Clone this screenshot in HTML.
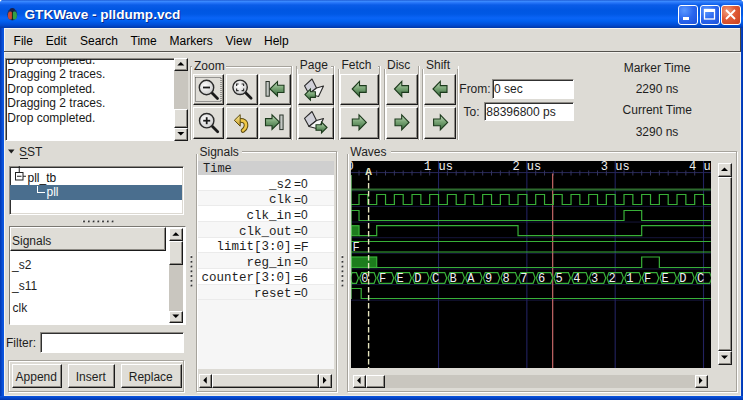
<!DOCTYPE html>
<html><head><meta charset="utf-8">
<style>
*{box-sizing:border-box;margin:0;padding:0}
html,body{width:743px;height:400px;overflow:hidden;background:#ffffff}
body{position:relative;font-family:"Liberation Sans",sans-serif;font-size:12px;color:#000}
.a{position:absolute}
.t{position:absolute;white-space:pre;line-height:1}
.btn{position:absolute;background:#dfddd7;border-top:1px solid #fff;border-left:1px solid #fff;border-right:1px solid #1a1a1a;border-bottom:1px solid #1a1a1a;box-shadow:inset -1px -1px 0 #8d8a84}
.sunk{position:absolute;background:#fff;border-top:1px solid #8d8a84;border-left:1px solid #8d8a84;border-right:1px solid #fff;border-bottom:1px solid #fff;box-shadow:inset 1px 1px 0 #303030}
.frm{position:absolute;border:1px solid #a6a39c;box-shadow:1px 1px 0 #fff, inset 1px 1px 0 #fff}
.trough{position:absolute;background:#c9c6bf}
svg{position:absolute;left:0;top:0}
</style></head><body>

<div class="a" style="left:0.00px;top:0.00px;width:743.00px;height:400.00px;background:#0b50d9;border-radius:4px 4px 0 0"></div>
<div class="a" style="left:0.00px;top:0.00px;width:743.00px;height:28.00px;background:linear-gradient(#1a56d0 0px,#3d8dff 1.2px,#2a78fa 2.5px,#0a5ce8 5px,#0056e2 10px,#0058e4 14px,#0a64f6 18px,#0060f0 21px,#004cd4 25px,#0038a8 28px);border-radius:4px 4px 0 0"></div>
<div class="a" style="left:0.00px;top:6.00px;width:4.00px;height:394.00px;background:linear-gradient(90deg,#0036b0,#0a55e0 3px)"></div>
<div class="a" style="left:739.00px;top:6.00px;width:4.00px;height:394.00px;background:linear-gradient(90deg,#0a55e0,#0036b0 4px)"></div>
<div class="a" style="left:0.00px;top:396.00px;width:743.00px;height:4.00px;background:linear-gradient(#0a55e0,#0036b0)"></div>
<div class="a" style="left:0.00px;top:0.00px;width:743.00px;height:28.00px;background:linear-gradient(#1a56d0 0px,#3d8dff 1.2px,#2a78fa 2.5px,#0a5ce8 5px,#0056e2 10px,#0058e4 14px,#0a64f6 18px,#0060f0 21px,#004cd4 25px,#0038a8 28px);border-radius:4px 4px 0 0"></div>
<div class="a" style="left:4.00px;top:28.00px;width:737.00px;height:368.00px;background:#dddbd5;box-shadow:inset 1px 1px 0 #f4f3ef, inset -1px -1px 0 #eeede8"></div>
<div class="a" style="left:4.00px;top:28.00px;width:737.00px;height:24.30px;border-right:1.5px solid #4a4843;border-bottom:1.6px solid #55534e;box-shadow:inset 1px 1px 0 #f6f5f1"></div>
<svg width="743" height="30" style="left:0;top:0"><ellipse cx="12.3" cy="14.5" rx="5" ry="6" fill="#1a2a50" opacity="0.85"/><ellipse cx="10.3" cy="15.5" rx="2.4" ry="4" fill="#c84a36"/><ellipse cx="14.5" cy="15.5" rx="2.4" ry="4" fill="#34a044"/><ellipse cx="12.3" cy="9.8" rx="2.6" ry="1.8" fill="#18204a"/><line x1="12.4" y1="11" x2="12.4" y2="20" stroke="#102010" stroke-width="0.9"/></svg>
<div class="t" style="left:24.50px;top:7.89px;font-size:13.6px;color:#fff;font-family:'Liberation Sans',sans-serif;font-weight:bold;text-shadow:1px 1px 0 #0a2a8a;">GTKWave - plldump.vcd</div>
<div class="a" style="left:678px;top:5px;width:20px;height:20px;border:1px solid #fff;border-radius:3px;background:radial-gradient(circle at 30% 25%,#5a98ff,#2a66ee 50%,#1c50d8)"></div>
<div class="a" style="left:699.5px;top:5px;width:20px;height:20px;border:1px solid #fff;border-radius:3px;background:radial-gradient(circle at 30% 25%,#5a98ff,#2a66ee 50%,#1c50d8)"></div>
<div class="a" style="left:721px;top:5px;width:20px;height:20px;border:1px solid #fff;border-radius:3px;background:radial-gradient(circle at 30% 30%,#f0a080,#e05a36 45%,#c8401e)"></div>
<svg width="743" height="30" style="left:0;top:0"><rect x="683" y="17" width="6" height="3" fill="#fff"/><rect x="704.5" y="9.5" width="10" height="9.5" fill="none" stroke="#fff" stroke-width="1.3"/><rect x="704.5" y="9.5" width="10" height="2.5" fill="#fff"/><path d="M726 10 L735 19 M735 10 L726 19" stroke="#fff" stroke-width="1.8"/></svg>
<div class="a" style="left:4.00px;top:52.30px;width:737.00px;height:1.00px;background:#f4f3ef"></div>
<div class="t" style="left:13.60px;top:34.84px;font-size:12px;color:#000;font-family:'Liberation Sans',sans-serif;">File</div>
<div class="t" style="left:45.80px;top:34.84px;font-size:12px;color:#000;font-family:'Liberation Sans',sans-serif;">Edit</div>
<div class="t" style="left:80.00px;top:34.84px;font-size:12px;color:#000;font-family:'Liberation Sans',sans-serif;">Search</div>
<div class="t" style="left:130.50px;top:34.84px;font-size:12px;color:#000;font-family:'Liberation Sans',sans-serif;">Time</div>
<div class="t" style="left:169.50px;top:34.84px;font-size:12px;color:#000;font-family:'Liberation Sans',sans-serif;">Markers</div>
<div class="t" style="left:225.50px;top:34.84px;font-size:12px;color:#000;font-family:'Liberation Sans',sans-serif;">View</div>
<div class="t" style="left:264.00px;top:34.84px;font-size:12px;color:#000;font-family:'Liberation Sans',sans-serif;">Help</div>
<div class="sunk" style="left:5px;top:57.5px;width:170px;height:83px;overflow:hidden">
<div class="t" style="left:1.3px;top:-4.66px;font-size:12px;color:#1a1a1a">Drop completed.</div>
<div class="t" style="left:1.3px;top:9.89px;font-size:12px;color:#1a1a1a">Dragging 2 traces.</div>
<div class="t" style="left:1.3px;top:24.44px;font-size:12px;color:#1a1a1a">Drop completed.</div>
<div class="t" style="left:1.3px;top:38.99px;font-size:12px;color:#1a1a1a">Dragging 2 traces.</div>
<div class="t" style="left:1.3px;top:53.54px;font-size:12px;color:#1a1a1a">Drop completed.</div>
</div>
<div class="trough" style="left:174.30px;top:57.50px;width:14.00px;height:83.30px;"></div>
<div class="btn" style="left:174.3px;top:57.5px;width:14.0px;height:13.5px"></div>
<div class="btn" style="left:174.3px;top:108.5px;width:14.0px;height:19.299999999999997px"></div>
<div class="btn" style="left:174.3px;top:127.80000000000001px;width:14.0px;height:13px"></div>
<div class="frm" style="left:190px;top:66px;width:102px;height:73.5px;border-bottom:none;box-shadow:1px 0 0 #fff, inset 1px 1px 0 #fff;"></div>
<div class="a" style="left:192.00px;top:63.00px;width:34.00px;height:6.00px;background:#dddbd5"></div>
<div class="frm" style="left:295.5px;top:66px;width:38.5px;height:73.5px;border-bottom:none;box-shadow:1px 0 0 #fff, inset 1px 1px 0 #fff;"></div>
<div class="a" style="left:297.00px;top:63.00px;width:34.00px;height:6.00px;background:#dddbd5"></div>
<div class="frm" style="left:337.5px;top:66px;width:42.0px;height:73.5px;border-bottom:none;box-shadow:1px 0 0 #fff, inset 1px 1px 0 #fff;"></div>
<div class="a" style="left:338.00px;top:63.00px;width:40.00px;height:6.00px;background:#dddbd5"></div>
<div class="frm" style="left:384px;top:66px;width:34.5px;height:73.5px;border-bottom:none;box-shadow:1px 0 0 #fff, inset 1px 1px 0 #fff;"></div>
<div class="a" style="left:384.00px;top:63.00px;width:34.00px;height:6.00px;background:#dddbd5"></div>
<div class="frm" style="left:422px;top:66px;width:35.5px;height:73.5px;border-bottom:none;box-shadow:1px 0 0 #fff, inset 1px 1px 0 #fff;"></div>
<div class="a" style="left:422.00px;top:63.00px;width:36.00px;height:6.00px;background:#dddbd5"></div>
<div class="t" style="left:194.00px;top:59.84px;font-size:12px;color:#1e1e1e;font-family:'Liberation Sans',sans-serif;">Zoom</div>
<div class="t" style="left:299.80px;top:59.34px;font-size:12px;color:#1e1e1e;font-family:'Liberation Sans',sans-serif;">Page</div>
<div class="t" style="left:341.50px;top:59.34px;font-size:12px;color:#1e1e1e;font-family:'Liberation Sans',sans-serif;">Fetch</div>
<div class="t" style="left:387.00px;top:59.34px;font-size:12px;color:#1e1e1e;font-family:'Liberation Sans',sans-serif;">Disc</div>
<div class="t" style="left:426.00px;top:59.34px;font-size:12px;color:#1e1e1e;font-family:'Liberation Sans',sans-serif;">Shift</div>
<div class="btn" style="left:192.5px;top:74px;width:31.5px;height:31px"></div>
<div class="btn" style="left:192.5px;top:106.5px;width:31.5px;height:32.0px"></div>
<div class="btn" style="left:225.5px;top:74px;width:32.0px;height:31px"></div>
<div class="btn" style="left:225.5px;top:106.5px;width:32.0px;height:32.0px"></div>
<div class="btn" style="left:258.5px;top:74px;width:32.5px;height:31px"></div>
<div class="btn" style="left:258.5px;top:106.5px;width:32.5px;height:32.0px"></div>
<div class="btn" style="left:298px;top:74px;width:35.5px;height:31px"></div>
<div class="btn" style="left:298px;top:106.5px;width:35.5px;height:32.0px"></div>
<div class="btn" style="left:340px;top:74px;width:38.5px;height:31px"></div>
<div class="btn" style="left:340px;top:106.5px;width:38.5px;height:32.0px"></div>
<div class="btn" style="left:385.5px;top:74px;width:32.0px;height:31px"></div>
<div class="btn" style="left:385.5px;top:106.5px;width:32.0px;height:32.0px"></div>
<div class="btn" style="left:423.5px;top:74px;width:32.5px;height:31px"></div>
<div class="btn" style="left:423.5px;top:106.5px;width:32.5px;height:32.0px"></div>
<div class="t" style="left:459.30px;top:82.84px;font-size:12px;color:#1e1e1e;font-family:'Liberation Sans',sans-serif;">From:</div>
<div class="sunk" style="left:491.5px;top:79px;width:82px;height:19.5px"></div>
<div class="t" style="left:494.00px;top:82.84px;font-size:12px;color:#1e1e1e;font-family:'Liberation Sans',sans-serif;">0 sec</div>
<div class="t" style="left:463.50px;top:105.64px;font-size:12px;color:#1e1e1e;font-family:'Liberation Sans',sans-serif;">To:</div>
<div class="sunk" style="left:484px;top:101.5px;width:89.5px;height:19.5px"></div>
<div class="t" style="left:486.30px;top:105.64px;font-size:12px;color:#1e1e1e;font-family:'Liberation Sans',sans-serif;">88396800 ps</div>
<div class="t" style="left:557.00px;width:200px;text-align:center;top:62.14px;font-size:12px;color:#1e1e1e;font-family:'Liberation Sans',sans-serif;">Marker Time</div>
<div class="t" style="left:557.00px;width:200px;text-align:center;top:83.04px;font-size:12px;color:#1e1e1e;font-family:'Liberation Sans',sans-serif;">2290 ns</div>
<div class="t" style="left:557.30px;width:200px;text-align:center;top:104.34px;font-size:12px;color:#1e1e1e;font-family:'Liberation Sans',sans-serif;">Current Time</div>
<div class="t" style="left:557.00px;width:200px;text-align:center;top:125.74px;font-size:12px;color:#1e1e1e;font-family:'Liberation Sans',sans-serif;">3290 ns</div>
<div class="t" style="left:19.00px;top:145.84px;font-size:12px;color:#1e1e1e;font-family:'Liberation Sans',sans-serif;">SST</div>
<div class="a" style="left:19.50px;top:157.50px;width:8.00px;height:1.00px;background:#1e1e1e"></div>
<div class="sunk" style="left:8.5px;top:165.5px;width:175.5px;height:49px;box-shadow:inset 1px 1px 0 #303030, inset -1px -1px 0 #dcd9d2"></div>
<div class="a" style="left:10.00px;top:185.00px;width:172.00px;height:14.50px;background:#4a6e8e"></div>
<div class="t" style="left:27.50px;top:171.54px;font-size:12px;color:#111;font-family:'Liberation Sans',sans-serif;">pll_tb</div>
<div class="t" style="left:46.50px;top:186.44px;font-size:12px;color:#fff;font-family:'Liberation Sans',sans-serif;">pll</div>
<div class="sunk" style="left:8.5px;top:226.3px;width:177px;height:98.5px;border-color:#7a7872 #fff #fff #7a7872;box-shadow:none"></div>
<div class="btn" style="left:9.5px;top:227.3px;width:156.5px;height:24.2px"></div>
<div class="t" style="left:12.00px;top:235.24px;font-size:12px;color:#1e1e1e;font-family:'Liberation Sans',sans-serif;">Signals</div>
<div class="t" style="left:12.00px;top:258.84px;font-size:12px;color:#1e1e1e;font-family:'Liberation Sans',sans-serif;">_s2</div>
<div class="t" style="left:12.00px;top:279.84px;font-size:12px;color:#1e1e1e;font-family:'Liberation Sans',sans-serif;">_s11</div>
<div class="t" style="left:12.50px;top:301.84px;font-size:12px;color:#1e1e1e;font-family:'Liberation Sans',sans-serif;">clk</div>
<div class="trough" style="left:169.30px;top:227.80px;width:14.00px;height:95.00px;"></div>
<div class="btn" style="left:169.3px;top:227.8px;width:14.0px;height:13.3px"></div>
<div class="btn" style="left:169.3px;top:241px;width:14.0px;height:24px"></div>
<div class="btn" style="left:169.3px;top:310.5px;width:14.0px;height:12.3px"></div>
<div class="t" style="left:6.00px;top:337.04px;font-size:12px;color:#1e1e1e;font-family:'Liberation Sans',sans-serif;">Filter:</div>
<div class="sunk" style="left:39.5px;top:332.3px;width:144.3px;height:21px"></div>
<div class="frm" style="left:8px;top:359.5px;width:176px;height:32.5px;box-shadow:inset 1px 1px 0 #fff, 1px 1px 0 #fff"></div>
<div class="btn" style="left:11.5px;top:363.5px;width:50.5px;height:24.5px"></div>
<div class="t" style="left:-63.75px;width:200px;text-align:center;top:371.14px;font-size:12px;color:#1e1e1e;font-family:'Liberation Sans',sans-serif;">Append</div>
<div class="btn" style="left:68px;top:363.5px;width:46.5px;height:24.5px"></div>
<div class="t" style="left:-9.25px;width:200px;text-align:center;top:371.14px;font-size:12px;color:#1e1e1e;font-family:'Liberation Sans',sans-serif;">Insert</div>
<div class="btn" style="left:120.5px;top:363.5px;width:61.5px;height:24.5px"></div>
<div class="t" style="left:50.75px;width:200px;text-align:center;top:371.14px;font-size:12px;color:#1e1e1e;font-family:'Liberation Sans',sans-serif;">Replace</div>
<div class="frm" style="left:195.5px;top:150.8px;width:141.0px;height:241.2px;"></div>
<div class="a" style="left:196.00px;top:147.80px;width:46.00px;height:6.00px;background:#dddbd5"></div>
<div class="t" style="left:199.50px;top:146.04px;font-size:12px;color:#1e1e1e;font-family:'Liberation Sans',sans-serif;">Signals</div>
<div class="a" style="left:198.00px;top:160.50px;width:136.00px;height:208.50px;background:#f6f6f6"></div>
<div class="a" style="left:198.00px;top:160.50px;width:136.00px;height:14.70px;background:#cfcfcf"></div>
<div class="t" style="left:203.00px;top:163.30px;font-size:12px;color:#1e1e1e;font-family:'Liberation Mono',monospace;">Time</div>
<div class="a" style="left:198.00px;top:175.20px;width:136.00px;height:15.63px;background:#ffffff;border-bottom:1px solid #ebebeb"></div>
<div class="a" style="left:198.00px;top:190.83px;width:136.00px;height:15.63px;background:#f7f7f7;border-bottom:1px solid #ebebeb"></div>
<div class="a" style="left:198.00px;top:206.46px;width:136.00px;height:15.63px;background:#ffffff;border-bottom:1px solid #ebebeb"></div>
<div class="a" style="left:198.00px;top:222.09px;width:136.00px;height:15.63px;background:#f7f7f7;border-bottom:1px solid #ebebeb"></div>
<div class="a" style="left:198.00px;top:237.72px;width:136.00px;height:15.63px;background:#ffffff;border-bottom:1px solid #ebebeb"></div>
<div class="a" style="left:198.00px;top:253.35px;width:136.00px;height:15.63px;background:#f7f7f7;border-bottom:1px solid #ebebeb"></div>
<div class="a" style="left:198.00px;top:268.98px;width:136.00px;height:15.63px;background:#ffffff;border-bottom:1px solid #ebebeb"></div>
<div class="a" style="left:198.00px;top:284.61px;width:136.00px;height:15.63px;background:#f7f7f7;border-bottom:1px solid #ebebeb"></div>
<div class="t" style="left:91.60px;width:200px;text-align:right;top:178.62px;font-size:12.5px;color:#1e1e1e;font-family:'Liberation Mono',monospace">_s2</div>
<div class="t" style="left:294.00px;top:178.04px;font-size:12px;color:#1e1e1e;font-family:'Liberation Sans',sans-serif;">=0</div>
<div class="t" style="left:91.60px;width:200px;text-align:right;top:194.25px;font-size:12.5px;color:#1e1e1e;font-family:'Liberation Mono',monospace">clk</div>
<div class="t" style="left:294.00px;top:193.67px;font-size:12px;color:#1e1e1e;font-family:'Liberation Sans',sans-serif;">=0</div>
<div class="t" style="left:91.60px;width:200px;text-align:right;top:209.88px;font-size:12.5px;color:#1e1e1e;font-family:'Liberation Mono',monospace">clk_in</div>
<div class="t" style="left:294.00px;top:209.30px;font-size:12px;color:#1e1e1e;font-family:'Liberation Sans',sans-serif;">=0</div>
<div class="t" style="left:91.60px;width:200px;text-align:right;top:225.51px;font-size:12.5px;color:#1e1e1e;font-family:'Liberation Mono',monospace">clk_out</div>
<div class="t" style="left:294.00px;top:224.93px;font-size:12px;color:#1e1e1e;font-family:'Liberation Sans',sans-serif;">=0</div>
<div class="t" style="left:91.60px;width:200px;text-align:right;top:241.14px;font-size:12.5px;color:#1e1e1e;font-family:'Liberation Mono',monospace">limit[3:0]</div>
<div class="t" style="left:294.00px;top:240.56px;font-size:12px;color:#1e1e1e;font-family:'Liberation Sans',sans-serif;">=F</div>
<div class="t" style="left:91.60px;width:200px;text-align:right;top:256.77px;font-size:12.5px;color:#1e1e1e;font-family:'Liberation Mono',monospace">reg_in</div>
<div class="t" style="left:294.00px;top:256.19px;font-size:12px;color:#1e1e1e;font-family:'Liberation Sans',sans-serif;">=0</div>
<div class="t" style="left:91.60px;width:200px;text-align:right;top:272.40px;font-size:12.5px;color:#1e1e1e;font-family:'Liberation Mono',monospace">counter[3:0]</div>
<div class="t" style="left:294.00px;top:271.82px;font-size:12px;color:#1e1e1e;font-family:'Liberation Sans',sans-serif;">=6</div>
<div class="t" style="left:91.60px;width:200px;text-align:right;top:288.03px;font-size:12.5px;color:#1e1e1e;font-family:'Liberation Mono',monospace">reset</div>
<div class="t" style="left:294.00px;top:287.45px;font-size:12px;color:#1e1e1e;font-family:'Liberation Sans',sans-serif;">=0</div>
<div class="trough" style="left:199.00px;top:374.00px;width:133.00px;height:13.50px;"></div>
<div class="btn" style="left:199px;top:374px;width:13px;height:13.5px"></div>
<div class="btn" style="left:212px;top:374px;width:106.5px;height:13.5px"></div>
<div class="btn" style="left:318.5px;top:374px;width:13.5px;height:13.5px"></div>
<div class="frm" style="left:347px;top:150.8px;width:390px;height:241.2px;"></div>
<div class="a" style="left:347.00px;top:147.80px;width:44.00px;height:6.00px;background:#dddbd5"></div>
<div class="t" style="left:350.30px;top:146.04px;font-size:12px;color:#1e1e1e;font-family:'Liberation Sans',sans-serif;">Waves</div>
<div class="a" style="left:350.80px;top:160.60px;width:360.00px;height:207.40px;background:#000"></div>
<div class="trough" style="left:718.00px;top:163.00px;width:14.00px;height:201.50px;"></div>
<div class="btn" style="left:718px;top:163px;width:14px;height:13.5px"></div>
<div class="btn" style="left:718px;top:176.5px;width:14px;height:174.5px"></div>
<div class="btn" style="left:718px;top:351.0px;width:14px;height:13.5px"></div>
<div class="trough" style="left:352.80px;top:374.50px;width:354.70px;height:13.00px;"></div>
<div class="btn" style="left:352.8px;top:374.5px;width:13px;height:13.0px"></div>
<div class="btn" style="left:365.6px;top:374.5px;width:19.899999999999977px;height:13.0px"></div>
<div class="btn" style="left:695.0px;top:374.5px;width:12.5px;height:13.0px"></div>
<svg width="743" height="400" style="left:0;top:0"><defs><clipPath id="wc"><rect x="350.8" y="160.6" width="359.99999999999994" height="207.4"/></clipPath></defs><g clip-path="url(#wc)"><line x1="351" y1="190.80" x2="711" y2="190.80" stroke="#16163a" stroke-width="1"/><line x1="351" y1="206.43" x2="711" y2="206.43" stroke="#16163a" stroke-width="1"/><line x1="351" y1="222.06" x2="711" y2="222.06" stroke="#16163a" stroke-width="1"/><line x1="351" y1="237.69" x2="711" y2="237.69" stroke="#16163a" stroke-width="1"/><line x1="351" y1="253.32" x2="711" y2="253.32" stroke="#16163a" stroke-width="1"/><line x1="351" y1="268.95" x2="711" y2="268.95" stroke="#16163a" stroke-width="1"/><line x1="351" y1="284.58" x2="711" y2="284.58" stroke="#16163a" stroke-width="1"/><line x1="351" y1="300.21" x2="711" y2="300.21" stroke="#16163a" stroke-width="1"/><line x1="351" y1="172.6" x2="711" y2="172.6" stroke="#28285a" stroke-width="1"/><line x1="350.20" y1="170.5" x2="350.20" y2="175.5" stroke="#34345e" stroke-width="1"/><line x1="359.03" y1="170.5" x2="359.03" y2="175.5" stroke="#34345e" stroke-width="1"/><line x1="367.87" y1="170.5" x2="367.87" y2="175.5" stroke="#34345e" stroke-width="1"/><line x1="376.70" y1="170.5" x2="376.70" y2="175.5" stroke="#34345e" stroke-width="1"/><line x1="385.53" y1="170.5" x2="385.53" y2="175.5" stroke="#34345e" stroke-width="1"/><line x1="394.37" y1="170.5" x2="394.37" y2="175.5" stroke="#34345e" stroke-width="1"/><line x1="403.20" y1="170.5" x2="403.20" y2="175.5" stroke="#34345e" stroke-width="1"/><line x1="412.03" y1="170.5" x2="412.03" y2="175.5" stroke="#34345e" stroke-width="1"/><line x1="420.86" y1="170.5" x2="420.86" y2="175.5" stroke="#34345e" stroke-width="1"/><line x1="429.70" y1="170.5" x2="429.70" y2="175.5" stroke="#34345e" stroke-width="1"/><line x1="438.53" y1="161" x2="438.53" y2="368" stroke="#222260" stroke-width="1.1"/><line x1="447.36" y1="170.5" x2="447.36" y2="175.5" stroke="#34345e" stroke-width="1"/><line x1="456.20" y1="170.5" x2="456.20" y2="175.5" stroke="#34345e" stroke-width="1"/><line x1="465.03" y1="170.5" x2="465.03" y2="175.5" stroke="#34345e" stroke-width="1"/><line x1="473.86" y1="170.5" x2="473.86" y2="175.5" stroke="#34345e" stroke-width="1"/><line x1="482.69" y1="170.5" x2="482.69" y2="175.5" stroke="#34345e" stroke-width="1"/><line x1="491.53" y1="170.5" x2="491.53" y2="175.5" stroke="#34345e" stroke-width="1"/><line x1="500.36" y1="170.5" x2="500.36" y2="175.5" stroke="#34345e" stroke-width="1"/><line x1="509.19" y1="170.5" x2="509.19" y2="175.5" stroke="#34345e" stroke-width="1"/><line x1="518.03" y1="170.5" x2="518.03" y2="175.5" stroke="#34345e" stroke-width="1"/><line x1="526.86" y1="161" x2="526.86" y2="368" stroke="#222260" stroke-width="1.1"/><line x1="535.69" y1="170.5" x2="535.69" y2="175.5" stroke="#34345e" stroke-width="1"/><line x1="544.53" y1="170.5" x2="544.53" y2="175.5" stroke="#34345e" stroke-width="1"/><line x1="553.36" y1="170.5" x2="553.36" y2="175.5" stroke="#34345e" stroke-width="1"/><line x1="562.19" y1="170.5" x2="562.19" y2="175.5" stroke="#34345e" stroke-width="1"/><line x1="571.02" y1="170.5" x2="571.02" y2="175.5" stroke="#34345e" stroke-width="1"/><line x1="579.86" y1="170.5" x2="579.86" y2="175.5" stroke="#34345e" stroke-width="1"/><line x1="588.69" y1="170.5" x2="588.69" y2="175.5" stroke="#34345e" stroke-width="1"/><line x1="597.52" y1="170.5" x2="597.52" y2="175.5" stroke="#34345e" stroke-width="1"/><line x1="606.36" y1="170.5" x2="606.36" y2="175.5" stroke="#34345e" stroke-width="1"/><line x1="615.19" y1="161" x2="615.19" y2="368" stroke="#222260" stroke-width="1.1"/><line x1="624.02" y1="170.5" x2="624.02" y2="175.5" stroke="#34345e" stroke-width="1"/><line x1="632.86" y1="170.5" x2="632.86" y2="175.5" stroke="#34345e" stroke-width="1"/><line x1="641.69" y1="170.5" x2="641.69" y2="175.5" stroke="#34345e" stroke-width="1"/><line x1="650.52" y1="170.5" x2="650.52" y2="175.5" stroke="#34345e" stroke-width="1"/><line x1="659.36" y1="170.5" x2="659.36" y2="175.5" stroke="#34345e" stroke-width="1"/><line x1="668.19" y1="170.5" x2="668.19" y2="175.5" stroke="#34345e" stroke-width="1"/><line x1="677.02" y1="170.5" x2="677.02" y2="175.5" stroke="#34345e" stroke-width="1"/><line x1="685.85" y1="170.5" x2="685.85" y2="175.5" stroke="#34345e" stroke-width="1"/><line x1="694.69" y1="170.5" x2="694.69" y2="175.5" stroke="#34345e" stroke-width="1"/><line x1="703.52" y1="161" x2="703.52" y2="368" stroke="#222260" stroke-width="1.1"/><line x1="712.35" y1="170.5" x2="712.35" y2="175.5" stroke="#34345e" stroke-width="1"/><text x="350.20" y="169.8" fill="#f0f0f0" font-family="Liberation Mono" font-size="12" text-anchor="middle">0</text><text x="438.53" y="169.8" fill="#f0f0f0" font-family="Liberation Mono" font-size="12" text-anchor="middle">1 us</text><text x="526.86" y="169.8" fill="#f0f0f0" font-family="Liberation Mono" font-size="12" text-anchor="middle">2 us</text><text x="615.19" y="169.8" fill="#f0f0f0" font-family="Liberation Mono" font-size="12" text-anchor="middle">3 us</text><text x="703.52" y="169.8" fill="#f0f0f0" font-family="Liberation Mono" font-size="12" text-anchor="middle">4 us</text><line x1="552.7" y1="173.5" x2="552.7" y2="368" stroke="#d87070" stroke-width="1.1"/><polyline points="351.00,189.40 711.00,189.40" fill="none" stroke="#2d6a2d" stroke-width="2"/><polyline points="351.00,204.50 359.03,204.50 359.03,194.50 367.87,194.50 367.87,204.50 376.70,204.50 376.70,194.50 385.53,194.50 385.53,204.50 394.37,204.50 394.37,194.50 403.20,194.50 403.20,204.50 412.03,204.50 412.03,194.50 420.86,194.50 420.86,204.50 429.70,204.50 429.70,194.50 438.53,194.50 438.53,204.50 447.36,204.50 447.36,194.50 456.20,194.50 456.20,204.50 465.03,204.50 465.03,194.50 473.86,194.50 473.86,204.50 482.69,204.50 482.69,194.50 491.53,194.50 491.53,204.50 500.36,204.50 500.36,194.50 509.19,194.50 509.19,204.50 518.03,204.50 518.03,194.50 526.86,194.50 526.86,204.50 535.69,204.50 535.69,194.50 544.53,194.50 544.53,204.50 553.36,204.50 553.36,194.50 562.19,194.50 562.19,204.50 571.03,204.50 571.03,194.50 579.86,194.50 579.86,204.50 588.69,204.50 588.69,194.50 597.52,194.50 597.52,204.50 606.36,204.50 606.36,194.50 615.19,194.50 615.19,204.50 624.02,204.50 624.02,194.50 632.86,194.50 632.86,204.50 641.69,204.50 641.69,194.50 650.52,194.50 650.52,204.50 659.36,204.50 659.36,194.50 668.19,194.50 668.19,204.50 677.02,204.50 677.02,194.50 685.85,194.50 685.85,204.50 694.69,204.50 694.69,194.50 703.52,194.50 703.52,204.50 712.00,204.50" fill="none" stroke="#38b038" stroke-width="1.2"/><polyline points="351.00,210.50 359.03,210.50 359.03,220.50 624.02,220.50 624.02,210.50 641.69,210.50 641.69,220.50 712.00,220.50" fill="none" stroke="#38b038" stroke-width="1.2"/><rect x="351.4" y="225.7" width="7.63" height="10.0" fill="#1d7d1d" stroke="#38b038" stroke-width="1.2"/><polyline points="359.03,235.70 376.70,235.70 376.70,225.70 518.03,225.70 518.03,235.70 641.69,235.70 641.69,225.70 712.00,225.70" fill="none" stroke="#38b038" stroke-width="1.2"/><polyline points="351.00,241.50 712.00,241.50" fill="none" stroke="#38b038" stroke-width="1.2"/><polyline points="351.00,252.00 712.00,252.00" fill="none" stroke="#38b038" stroke-width="1.2"/><text x="352.5" y="251" fill="#f0f0f0" font-family="Liberation Mono" font-size="12">F</text><rect x="351.4" y="257" width="25.30" height="10.5" fill="#1d7d1d" stroke="#38b038" stroke-width="1.2"/><polyline points="376.70,267.50 641.69,267.50 641.69,257.00 659.36,257.00 659.36,267.50 712.00,267.50" fill="none" stroke="#38b038" stroke-width="1.2"/><polyline points="350.10,277.95 352.10,272.60 356.43,272.60 358.43,277.95 356.43,283.30 352.10,283.30 350.10,277.95" fill="none" stroke="#38b038" stroke-width="1.2"/><polyline points="359.63,277.95 361.63,272.60 374.10,272.60 376.10,277.95 374.10,283.30 361.63,283.30 359.63,277.95" fill="none" stroke="#38b038" stroke-width="1.2"/><text x="361.23" y="281.6" fill="#f0f0f0" font-family="Liberation Mono" font-size="12">0</text><polyline points="377.30,277.95 379.30,272.60 391.76,272.60 393.76,277.95 391.76,283.30 379.30,283.30 377.30,277.95" fill="none" stroke="#38b038" stroke-width="1.2"/><text x="378.90" y="281.6" fill="#f0f0f0" font-family="Liberation Mono" font-size="12">F</text><polyline points="394.97,277.95 396.97,272.60 409.43,272.60 411.43,277.95 409.43,283.30 396.97,283.30 394.97,277.95" fill="none" stroke="#38b038" stroke-width="1.2"/><text x="396.56" y="281.6" fill="#f0f0f0" font-family="Liberation Mono" font-size="12">E</text><polyline points="412.63,277.95 414.63,272.60 427.10,272.60 429.10,277.95 427.10,283.30 414.63,283.30 412.63,277.95" fill="none" stroke="#38b038" stroke-width="1.2"/><text x="414.23" y="281.6" fill="#f0f0f0" font-family="Liberation Mono" font-size="12">D</text><polyline points="430.30,277.95 432.30,272.60 444.76,272.60 446.76,277.95 444.76,283.30 432.30,283.30 430.30,277.95" fill="none" stroke="#38b038" stroke-width="1.2"/><text x="431.90" y="281.6" fill="#f0f0f0" font-family="Liberation Mono" font-size="12">C</text><polyline points="447.96,277.95 449.96,272.60 462.43,272.60 464.43,277.95 462.43,283.30 449.96,283.30 447.96,277.95" fill="none" stroke="#38b038" stroke-width="1.2"/><text x="449.56" y="281.6" fill="#f0f0f0" font-family="Liberation Mono" font-size="12">B</text><polyline points="465.63,277.95 467.63,272.60 480.09,272.60 482.09,277.95 480.09,283.30 467.63,283.30 465.63,277.95" fill="none" stroke="#38b038" stroke-width="1.2"/><text x="467.23" y="281.6" fill="#f0f0f0" font-family="Liberation Mono" font-size="12">A</text><polyline points="483.30,277.95 485.30,272.60 497.76,272.60 499.76,277.95 497.76,283.30 485.30,283.30 483.30,277.95" fill="none" stroke="#38b038" stroke-width="1.2"/><text x="484.89" y="281.6" fill="#f0f0f0" font-family="Liberation Mono" font-size="12">9</text><polyline points="500.96,277.95 502.96,272.60 515.43,272.60 517.43,277.95 515.43,283.30 502.96,283.30 500.96,277.95" fill="none" stroke="#38b038" stroke-width="1.2"/><text x="502.56" y="281.6" fill="#f0f0f0" font-family="Liberation Mono" font-size="12">8</text><polyline points="518.63,277.95 520.63,272.60 533.09,272.60 535.09,277.95 533.09,283.30 520.63,283.30 518.63,277.95" fill="none" stroke="#38b038" stroke-width="1.2"/><text x="520.23" y="281.6" fill="#f0f0f0" font-family="Liberation Mono" font-size="12">7</text><polyline points="536.29,277.95 538.29,272.60 550.76,272.60 552.76,277.95 550.76,283.30 538.29,283.30 536.29,277.95" fill="none" stroke="#38b038" stroke-width="1.2"/><text x="537.89" y="281.6" fill="#f0f0f0" font-family="Liberation Mono" font-size="12">6</text><polyline points="553.96,277.95 555.96,272.60 568.42,272.60 570.42,277.95 568.42,283.30 555.96,283.30 553.96,277.95" fill="none" stroke="#38b038" stroke-width="1.2"/><text x="555.56" y="281.6" fill="#f0f0f0" font-family="Liberation Mono" font-size="12">5</text><polyline points="571.63,277.95 573.63,272.60 586.09,272.60 588.09,277.95 586.09,283.30 573.63,283.30 571.63,277.95" fill="none" stroke="#38b038" stroke-width="1.2"/><text x="573.23" y="281.6" fill="#f0f0f0" font-family="Liberation Mono" font-size="12">4</text><polyline points="589.29,277.95 591.29,272.60 603.76,272.60 605.76,277.95 603.76,283.30 591.29,283.30 589.29,277.95" fill="none" stroke="#38b038" stroke-width="1.2"/><text x="590.89" y="281.6" fill="#f0f0f0" font-family="Liberation Mono" font-size="12">3</text><polyline points="606.96,277.95 608.96,272.60 621.42,272.60 623.42,277.95 621.42,283.30 608.96,283.30 606.96,277.95" fill="none" stroke="#38b038" stroke-width="1.2"/><text x="608.56" y="281.6" fill="#f0f0f0" font-family="Liberation Mono" font-size="12">2</text><polyline points="624.62,277.95 626.62,272.60 639.09,272.60 641.09,277.95 639.09,283.30 626.62,283.30 624.62,277.95" fill="none" stroke="#38b038" stroke-width="1.2"/><text x="626.22" y="281.6" fill="#f0f0f0" font-family="Liberation Mono" font-size="12">1</text><polyline points="642.29,277.95 644.29,272.60 656.75,272.60 658.75,277.95 656.75,283.30 644.29,283.30 642.29,277.95" fill="none" stroke="#38b038" stroke-width="1.2"/><text x="643.89" y="281.6" fill="#f0f0f0" font-family="Liberation Mono" font-size="12">F</text><polyline points="659.96,277.95 661.96,272.60 674.42,272.60 676.42,277.95 674.42,283.30 661.96,283.30 659.96,277.95" fill="none" stroke="#38b038" stroke-width="1.2"/><text x="661.56" y="281.6" fill="#f0f0f0" font-family="Liberation Mono" font-size="12">E</text><polyline points="677.62,277.95 679.62,272.60 692.09,272.60 694.09,277.95 692.09,283.30 679.62,283.30 677.62,277.95" fill="none" stroke="#38b038" stroke-width="1.2"/><text x="679.22" y="281.6" fill="#f0f0f0" font-family="Liberation Mono" font-size="12">D</text><polyline points="695.29,277.95 697.29,272.60 709.75,272.60 711.75,277.95 709.75,283.30 697.29,283.30 695.29,277.95" fill="none" stroke="#38b038" stroke-width="1.2"/><text x="696.89" y="281.6" fill="#f0f0f0" font-family="Liberation Mono" font-size="12">C</text><polyline points="712.95,277.95 714.95,272.60 727.42,272.60 729.42,277.95 727.42,283.30 714.95,283.30 712.95,277.95" fill="none" stroke="#38b038" stroke-width="1.2"/><text x="714.55" y="281.6" fill="#f0f0f0" font-family="Liberation Mono" font-size="12">B</text><polyline points="351.00,288.50 361.20,288.50 361.20,298.50 712.00,298.50" fill="none" stroke="#38b038" stroke-width="1.2"/><line x1="351.1" y1="175" x2="351.1" y2="299" stroke="#70c870" stroke-width="1.2"/><line x1="368.6" y1="175" x2="368.6" y2="368" stroke="#e8e6c0" stroke-width="1.4" stroke-dasharray="5.5,2.5"/><text x="368.6" y="175" fill="#e8e6c0" font-family="Liberation Mono" font-size="11" font-weight="bold" text-anchor="middle">A</text></g></svg>
<svg width="743" height="400" style="left:0;top:0"><defs>
<linearGradient id="ga" x1="0" y1="0" x2="0" y2="1"><stop offset="0" stop-color="#c8e0c4"/><stop offset="0.45" stop-color="#7aa676"/><stop offset="1" stop-color="#35663a"/></linearGradient>
<radialGradient id="gl" cx="0.4" cy="0.4" r="0.7"><stop offset="0" stop-color="#ffffff"/><stop offset="1" stop-color="#c8c8c8"/></radialGradient>
<linearGradient id="gy" x1="0" y1="0" x2="0" y2="1"><stop offset="0" stop-color="#fff0a0"/><stop offset="1" stop-color="#c89a20"/></linearGradient>
<linearGradient id="gp" x1="0" y1="0" x2="1" y2="1"><stop offset="0" stop-color="#ffffff"/><stop offset="1" stop-color="#b8b8c0"/></linearGradient>
</defs><line x1="211.3" y1="92.3" x2="217.5" y2="98.5" stroke="#1a1a1a" stroke-width="2.8" stroke-linecap="round"/><circle cx="206.5" cy="87.5" r="7.2" fill="url(#gl)" stroke="#2a2a2a" stroke-width="1.4"/><line x1="203" y1="87.5" x2="210" y2="87.5" stroke="#1a1a1a" stroke-width="1.8"/><line x1="211.5" y1="125.5" x2="217.7" y2="131.7" stroke="#1a1a1a" stroke-width="2.8" stroke-linecap="round"/><circle cx="206.7" cy="120.7" r="7.2" fill="url(#gl)" stroke="#2a2a2a" stroke-width="1.4"/><line x1="203.2" y1="120.7" x2="210.2" y2="120.7" stroke="#1a1a1a" stroke-width="1.8"/><line x1="206.7" y1="117.2" x2="206.7" y2="124.2" stroke="#1a1a1a" stroke-width="1.8"/><line x1="244.9" y1="92.1" x2="251.1" y2="98.3" stroke="#1a1a1a" stroke-width="2.8" stroke-linecap="round"/><circle cx="240.1" cy="87.3" r="7.2" fill="url(#gl)" stroke="#2a2a2a" stroke-width="1.4"/><path d="M236.6,86 v-2 h2 M241.6,84 h2 v2 M243.6,88.6 v2 h-2 M238.6,90.6 h-2 v-2" fill="none" stroke="#333" stroke-width="1.2"/><rect x="266" y="81.5" width="3.3" height="14.7" fill="#c4c8c4" stroke="#2a342a" stroke-width="1"/><path d="M270,88.9 L277.5,81.60000000000001 L277.5,85.30000000000001 L284,85.30000000000001 L284,92.5 L277.5,92.5 L277.5,96.2 Z" fill="url(#ga)" stroke="#1c3a1c" stroke-width="1.1" stroke-linejoin="miter"/><rect x="279.8" y="115" width="3.3" height="14.6" fill="#c4c8c4" stroke="#2a342a" stroke-width="1"/><path d="M279.5,122.2 L272.0,114.9 L272.0,118.60000000000001 L265.5,118.60000000000001 L265.5,125.8 L272.0,125.8 L272.0,129.5 Z" fill="url(#ga)" stroke="#1c3a1c" stroke-width="1.1" stroke-linejoin="miter"/><path d="M238.5,120.5 Q246.5,119.5 246,126 Q245.5,129 243,130.5" fill="none" stroke="#5a4a10" stroke-width="4.6" stroke-linecap="round"/><path d="M238.5,120.5 Q246.5,119.5 246,126 Q245.5,129 243,130.5" fill="none" stroke="#f0c848" stroke-width="2.6" stroke-linecap="round"/><path d="M234.3,120.3 L240.2,114.6 L240.2,126.2 Z" fill="url(#gy)" stroke="#5a4a10" stroke-width="1"/><path d="M312,79 L304.5,85.8 L309,94 L316.5,88 Z" fill="#d0d0d8" stroke="#2a2a2a" stroke-width="1.1" stroke-linejoin="round"/><path d="M316.5,88 L323.5,86 L318.5,96.5 L309,94 Z" fill="#f6f6f6" stroke="#2a2a2a" stroke-width="1.1" stroke-linejoin="round"/><path d="M304.9,94.6 L310.4,89.1 L310.4,91.8 L315.4,91.8 L315.4,97.39999999999999 L310.4,97.39999999999999 L310.4,100.1 Z" fill="url(#ga)" stroke="#1c3a1c" stroke-width="1.1" stroke-linejoin="miter"/><path d="M312,111.5 L304.5,118.3 L309,126.5 L316.5,120.5 Z" fill="#d0d0d8" stroke="#2a2a2a" stroke-width="1.1" stroke-linejoin="round"/><path d="M316.5,120.5 L323.5,118.5 L318.5,129.0 L309,126.5 Z" fill="#f6f6f6" stroke="#2a2a2a" stroke-width="1.1" stroke-linejoin="round"/><path d="M327,127.5 L321.5,122.0 L321.5,124.7 L316,124.7 L316,130.3 L321.5,130.3 L321.5,133.0 Z" fill="url(#ga)" stroke="#1c3a1c" stroke-width="1.1" stroke-linejoin="miter"/><path d="M352.2,89 L359.5,81.4 L359.5,85.6 L366.2,85.6 L366.2,92.4 L359.5,92.4 L359.5,96.6 Z" fill="url(#ga)" stroke="#1c3a1c" stroke-width="1.1" stroke-linejoin="miter"/><path d="M394.5,89 L401.8,81.4 L401.8,85.6 L408.5,85.6 L408.5,92.4 L401.8,92.4 L401.8,96.6 Z" fill="url(#ga)" stroke="#1c3a1c" stroke-width="1.1" stroke-linejoin="miter"/><path d="M433,89 L440.3,81.4 L440.3,85.6 L447,85.6 L447,92.4 L440.3,92.4 L440.3,96.6 Z" fill="url(#ga)" stroke="#1c3a1c" stroke-width="1.1" stroke-linejoin="miter"/><path d="M366.3,122.4 L359.0,114.80000000000001 L359.0,119.0 L352.3,119.0 L352.3,125.80000000000001 L359.0,125.80000000000001 L359.0,130.0 Z" fill="url(#ga)" stroke="#1c3a1c" stroke-width="1.1" stroke-linejoin="miter"/><path d="M409,122.4 L401.7,114.80000000000001 L401.7,119.0 L395,119.0 L395,125.80000000000001 L401.7,125.80000000000001 L401.7,130.0 Z" fill="url(#ga)" stroke="#1c3a1c" stroke-width="1.1" stroke-linejoin="miter"/><path d="M447.6,122.4 L440.3,114.80000000000001 L440.3,119.0 L433.6,119.0 L433.6,125.80000000000001 L440.3,125.80000000000001 L440.3,130.0 Z" fill="url(#ga)" stroke="#1c3a1c" stroke-width="1.1" stroke-linejoin="miter"/><polygon points="177.3,65.5 184.3,65.5 180.8,62.0" fill="#000"/><polygon points="177.3,132.05 184.3,132.05 180.8,135.55" fill="#000"/><rect x="195.5" y="77.5" width="25.5" height="24" fill="none" stroke="#4a4a4a" stroke-width="1" stroke-dasharray="1,1"/><polygon points="8,149.5 14.5,149.5 11.25,153.5" fill="#1e1e1e"/><rect x="15.5" y="172.5" width="7.5" height="7.5" fill="#fff" stroke="#222" stroke-width="1"/><line x1="17" y1="176.25" x2="21.5" y2="176.25" stroke="#222"/><line x1="19.25" y1="166" x2="19.25" y2="172.5" stroke="#222"/><line x1="23" y1="176.25" x2="26" y2="176.25" stroke="#222"/><line x1="37.5" y1="186" x2="37.5" y2="193" stroke="#fff"/><line x1="37.5" y1="192.5" x2="45" y2="192.5" stroke="#fff"/><rect x="82.50" y="220.00" width="2" height="2" fill="#fff"/><rect x="83.10" y="220.50" width="1.8" height="1.8" fill="#333"/><rect x="87.25" y="220.00" width="2" height="2" fill="#fff"/><rect x="87.85" y="220.50" width="1.8" height="1.8" fill="#333"/><rect x="92.00" y="220.00" width="2" height="2" fill="#fff"/><rect x="92.60" y="220.50" width="1.8" height="1.8" fill="#333"/><rect x="96.75" y="220.00" width="2" height="2" fill="#fff"/><rect x="97.35" y="220.50" width="1.8" height="1.8" fill="#333"/><rect x="101.50" y="220.00" width="2" height="2" fill="#fff"/><rect x="102.10" y="220.50" width="1.8" height="1.8" fill="#333"/><rect x="106.25" y="220.00" width="2" height="2" fill="#fff"/><rect x="106.85" y="220.50" width="1.8" height="1.8" fill="#333"/><rect x="111.00" y="220.00" width="2" height="2" fill="#fff"/><rect x="111.60" y="220.50" width="1.8" height="1.8" fill="#333"/><rect x="190.00" y="255.50" width="2" height="2" fill="#fff"/><rect x="190.50" y="256.10" width="1.8" height="1.8" fill="#333"/><rect x="190.00" y="260.25" width="2" height="2" fill="#fff"/><rect x="190.50" y="260.85" width="1.8" height="1.8" fill="#333"/><rect x="190.00" y="265.00" width="2" height="2" fill="#fff"/><rect x="190.50" y="265.60" width="1.8" height="1.8" fill="#333"/><rect x="190.00" y="269.75" width="2" height="2" fill="#fff"/><rect x="190.50" y="270.35" width="1.8" height="1.8" fill="#333"/><rect x="190.00" y="274.50" width="2" height="2" fill="#fff"/><rect x="190.50" y="275.10" width="1.8" height="1.8" fill="#333"/><rect x="190.00" y="279.25" width="2" height="2" fill="#fff"/><rect x="190.50" y="279.85" width="1.8" height="1.8" fill="#333"/><rect x="190.00" y="284.00" width="2" height="2" fill="#fff"/><rect x="190.50" y="284.60" width="1.8" height="1.8" fill="#333"/><rect x="341.00" y="255.50" width="2" height="2" fill="#fff"/><rect x="341.50" y="256.10" width="1.8" height="1.8" fill="#333"/><rect x="341.00" y="260.25" width="2" height="2" fill="#fff"/><rect x="341.50" y="260.85" width="1.8" height="1.8" fill="#333"/><rect x="341.00" y="265.00" width="2" height="2" fill="#fff"/><rect x="341.50" y="265.60" width="1.8" height="1.8" fill="#333"/><rect x="341.00" y="269.75" width="2" height="2" fill="#fff"/><rect x="341.50" y="270.35" width="1.8" height="1.8" fill="#333"/><rect x="341.00" y="274.50" width="2" height="2" fill="#fff"/><rect x="341.50" y="275.10" width="1.8" height="1.8" fill="#333"/><rect x="341.00" y="279.25" width="2" height="2" fill="#fff"/><rect x="341.50" y="279.85" width="1.8" height="1.8" fill="#333"/><rect x="341.00" y="284.00" width="2" height="2" fill="#fff"/><rect x="341.50" y="284.60" width="1.8" height="1.8" fill="#333"/><polygon points="172.3,235.70000000000002 179.3,235.70000000000002 175.8,232.20000000000002" fill="#000"/><polygon points="172.3,314.40000000000003 179.3,314.40000000000003 175.8,317.90000000000003" fill="#000"/><polygon points="206.75,376.75 206.75,383.75 203.25,380.25" fill="#000"/><polygon points="323.0,376.75 323.0,383.75 326.5,380.25" fill="#000"/><polygon points="721.0,171.0 728.0,171.0 724.5,167.5" fill="#000"/><polygon points="721.0,355.5 728.0,355.5 724.5,359.0" fill="#000"/><polygon points="360.55,377.0 360.55,384.0 357.05,380.5" fill="#000"/><polygon points="699.0,377.0 699.0,384.0 702.5,380.5" fill="#000"/></svg>
</body></html>
